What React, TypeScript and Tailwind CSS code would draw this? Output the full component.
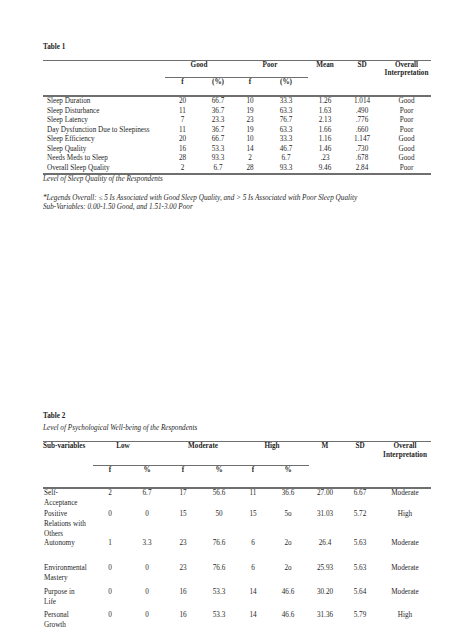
import React from "react";

const t1Rows = [
  ["Sleep Duration", "20", "66.7", "10", "33.3", "1.26", "1.014", "Good"],
  ["Sleep Disturbance", "11", "36.7", "19", "63.3", "1.63", ".490", "Poor"],
  ["Sleep Latency", "7", "23.3", "23", "76.7", "2.13", ".776", "Poor"],
  ["Day Dysfunction Due to Sleepiness", "11", "36.7", "19", "63.3", "1.66", ".660", "Poor"],
  ["Sleep Efficiency", "20", "66.7", "10", "33.3", "1.16", "1.147", "Good"],
  ["Sleep Quality", "16", "53.3", "14", "46.7", "1.46", ".730", "Good"],
  ["Needs Meds to Sleep", "28", "93.3", "2", "6.7", ".23", ".678", "Good"],
  ["Overall Sleep Quality", "2", "6.7", "28", "93.3", "9.46", "2.84", "Poor"],
];

const t2Rows: { label: string[]; h: string; vals: string[] }[] = [
  { label: ["Self-", "Acceptance"], h: "h-[21px]", vals: ["2", "6.7", "17", "56.6", "11", "36.6", "27.00", "6.67", "Moderate"] },
  { label: ["Positive", "Relations with", "Others"], h: "h-[29px]", vals: ["0", "0", "15", "50", "15", "5o", "31.03", "5.72", "High"] },
  { label: ["Autonomy"], h: "h-[25px]", vals: ["1", "3.3", "23", "76.6", "6", "2o", "26.4", "5.63", "Moderate"] },
  { label: ["Environmental", "Mastery"], h: "h-[24px]", vals: ["0", "0", "23", "76.6", "6", "2o", "25.93", "5.63", "Moderate"] },
  { label: ["Purpose in", "Life"], h: "h-[23px]", vals: ["0", "0", "16", "53.3", "14", "46.6", "30.20", "5.64", "Moderate"] },
  { label: ["Personal", "Growth"], h: "h-[24px]", vals: ["0", "0", "16", "53.3", "14", "46.6", "31.36", "5.79", "High"] },
];

const t1Cols = "grid grid-cols-[122px_35px_36px_28px_44px_34px_40px_49px]";
const t2Cols = "grid grid-cols-[50px_34px_40px_32px_40px_28px_42px_32px_38px_52px]";

export default function App() {
  return (
    <div className="w-[474px] h-[632px] overflow-hidden bg-white text-[#1f1f1f] font-['Liberation_Serif','Times_New_Roman',serif] text-[7.2px]">
      <div className="px-[43px] pt-[42px]">
        {/* Table 1 */}
        <div className="font-bold leading-[10px]">Table 1</div>
        <div className="mt-[8px] h-px bg-[#6f6f6f]" />
        <div className={`${t1Cols} font-bold leading-[8px] h-[16px] text-center`}>
          <div />
          <div className="col-span-2 pr-[3px]">Good</div>
          <div className="col-span-2 pr-[4px]">Poor</div>
          <div>Mean</div>
          <div>SD</div>
          <div>
            Overall
            <br />
            Interpretation
          </div>
        </div>
        <div className={t1Cols}>
          <div />
          <div className="col-span-4 h-px bg-[#6f6f6f]" />
        </div>
        <div className={`${t1Cols} font-bold leading-[8px] text-center`}>
          <div />
          <div>f</div>
          <div>(%)</div>
          <div>f</div>
          <div>(%)</div>
        </div>
        <div className="mt-[9px] h-[2px] bg-[#6f6f6f]" />
        <div className="leading-[9.5px]">
          {t1Rows.map((r) => (
            <div key={r[0]} className={`${t1Cols} text-center`}>
              <div className="text-left pl-[4px] whitespace-nowrap">{r[0]}</div>
              {r.slice(1).map((v, i) => (
                <div key={i}>{v}</div>
              ))}
            </div>
          ))}
        </div>
        <div className="h-[2px] bg-[#6f6f6f]" />
        <div className="italic leading-[8px]">Level of Sleep Quality of the Respondents</div>
        <div className="mt-[11px] italic leading-[9px] whitespace-nowrap">
          <div>*Legends Overall: ≤ 5 Is Associated with Good Sleep Quality, and &gt; 5 Is Associated with Poor Sleep Quality</div>
          <div>Sub-Variables: 0.00-1.50 Good, and 1.51-3.00 Poor</div>
        </div>

        {/* Table 2 */}
        <div className="mt-[199px] font-bold leading-[10px]">Table 2</div>
        <div className="mt-[2px] italic leading-[10px]">Level of Psychological Well-being of the Respondents</div>
        <div className="mt-[8px] h-px bg-[#6f6f6f]" />
        <div className={`${t2Cols} font-bold leading-[9px] h-[23px] text-center`}>
          <div className="text-left whitespace-nowrap">Sub-variables</div>
          <div className="col-span-2 pr-[14px]">Low</div>
          <div className="col-span-2">Moderate</div>
          <div className="col-span-2 pr-[4px]">High</div>
          <div>M</div>
          <div>SD</div>
          <div>
            Overall
            <br />
            Interpretation
          </div>
        </div>
        <div className={t2Cols}>
          <div />
          <div className="col-span-6 h-px bg-[#6f6f6f]" />
        </div>
        <div className={`${t2Cols} font-bold leading-[8px] text-center`}>
          <div />
          <div>f</div>
          <div>%</div>
          <div>f</div>
          <div>%</div>
          <div>f</div>
          <div>%</div>
        </div>
        <div className="mt-[13px] h-[2px] bg-[#6f6f6f]" />
        <div className="leading-[9.8px]">
          {t2Rows.map((r) => (
            <div key={r.label[0]} className={`${t2Cols} ${r.h} text-center`}>
              <div className="text-left pl-px whitespace-nowrap">
                {r.label.map((l) => (
                  <div key={l}>{l}</div>
                ))}
              </div>
              {r.vals.map((v, i) => (
                <div key={i}>{v}</div>
              ))}
            </div>
          ))}
        </div>
      </div>
    </div>
  );
}
